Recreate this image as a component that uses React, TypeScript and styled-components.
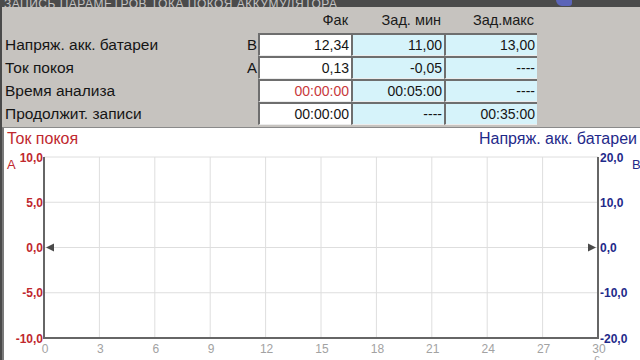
import { Fragment } from "react";
import styled, { createGlobalStyle } from "styled-components";

const GlobalStyle = createGlobalStyle`
  html, body {
    margin: 0;
    padding: 0;
    width: 640px;
    height: 360px;
    overflow: hidden;
    background: #c6c3bf;
  }
  * {
    box-sizing: border-box;
  }
`;

const Frame = styled.div`
  width: 640px;
  height: 360px;
  display: flex;
  flex-direction: column;
  font-family: "Liberation Sans", Arial, sans-serif;
  background: #c6c3bf;
  overflow: hidden;
`;

const TitleBar = styled.div`
  height: 7px;
  flex: 0 0 7px;
  background: #4b4b4b;
  display: flex;
  align-items: flex-end;
  justify-content: space-between;
  padding: 0 0 0 4px;
  overflow: hidden;
`;

const TitleText = styled.div`
  color: #c4c4c4;
  font-size: 12px;
  line-height: 12px;
  margin-bottom: -3px;
  letter-spacing: 0.5px;
  white-space: nowrap;
`;

const TitleIcon = styled.div`
  width: 16px;
  height: 6px;
  margin-right: 68px;
  align-self: flex-start;
  background: #5b64b8;
  border-radius: 0 0 3px 6px;
`;

const Body = styled.div`
  flex: 1;
  display: flex;
  flex-direction: column;
  border-left: 2px solid #4a4a4a;
`;

const TopPanel = styled.div`
  height: 120px;
  flex: 0 0 120px;
  display: grid;
  grid-template-columns: 241px 14px 93px 93px 93px;
  grid-template-rows: 26px repeat(4, 23px);
  align-items: stretch;
  padding-left: 1px;
`;

const HeadCell = styled.div`
  font-size: 14.5px;
  color: #1a1a1a;
  text-align: right;
  padding: 5px 3px 0 0;
`;

const Label = styled.div`
  font-size: 15.5px;
  color: #151515;
  display: flex;
  align-items: center;
  padding-left: 2px;
`;

const Unit = styled.div`
  font-size: 15px;
  color: #151515;
  display: flex;
  align-items: center;
  justify-content: flex-end;
  padding-right: 1px;
`;

const ValueCell = styled.div<{ $cyan?: boolean; $red?: boolean }>`
  font-size: 14px;
  color: ${({ $red }) => ($red ? "#c8383c" : "#151515")};
  background: ${({ $cyan }) => ($cyan ? "#d6f3fa" : "#ffffff")};
  border-top: 2px solid #6e6e6e;
  border-left: 2px solid #6e6e6e;
  border-bottom: 1px solid #ececec;
  display: flex;
  align-items: center;
  justify-content: flex-end;
  padding-right: 2px;
`;

const ChartPanel = styled.div`
  flex: 1;
  display: flex;
  flex-direction: column;
  background: #ffffff;
  border-top: 1px solid #8a8a8a;
  border-left: 2px solid #7a7a7a;
`;

const ChartHeader = styled.div`
  height: 21px;
  flex: 0 0 21px;
  display: flex;
  align-items: center;
  justify-content: space-between;
  padding: 1px 3px 0 3px;
  font-size: 16px;
`;

const SeriesTitle = styled.span<{ $color: string }>`
  color: ${({ $color }) => $color};
`;

const Plot = styled.svg`
  display: block;
  flex: 1;
  font-family: "Liberation Sans", Arial, sans-serif;
`;

const RED = "#c0282e";
const BLUE = "#1f2a8a";

const rows = [
  { label: "Напряж. акк. батареи", unit: "В", fak: "12,34", min: "11,00", max: "13,00" },
  { label: "Ток покоя", unit: "А", fak: "0,13", min: "-0,05", max: "----" },
  { label: "Время анализа", unit: "", fak: "00:00:00", min: "00:05:00", max: "----", red: true },
  { label: "Продолжит. записи", unit: "", fak: "00:00:00", min: "----", max: "00:35:00" },
];

const X0 = 40;
const X1 = 594;
const Y0 = 8;
const Y1 = 189;
const leftTicks = ["10,0", "5,0", "0,0", "-5,0", "-10,0"];
const rightTicks = ["20,0", "10,0", "0,0", "-10,0", "-20,0"];

function Chart() {
  const xs = Array.from({ length: 11 }, (_, i) => X0 + ((X1 - X0) * i) / 10);
  const ys = Array.from({ length: 5 }, (_, i) => Y0 + ((Y1 - Y0) * i) / 4);
  const mid = ys[2];
  return (
    <Plot viewBox="0 0 636 211" width={636} height={211}>
      {xs.slice(1, 10).map((x) => (
        <line key={x} x1={x} y1={Y0} x2={x} y2={Y1} stroke="#dedede" strokeWidth={1} />
      ))}
      {ys.slice(0, 4).map((y) => (
        <line key={y} x1={X0} y1={y} x2={X1} y2={y} stroke="#dedede" strokeWidth={1} />
      ))}
      <line x1={X0} y1={Y0} x2={X0} y2={Y1 + 1} stroke="#666" strokeWidth={2} />
      <line x1={X1} y1={Y0} x2={X1} y2={Y1 + 1} stroke="#666" strokeWidth={2} />
      <line x1={X0} y1={Y1} x2={X1} y2={Y1} stroke="#666" strokeWidth={2} />
      <polygon points={`${X0 + 2},${mid} ${X0 + 10},${mid - 4} ${X0 + 10},${mid + 4}`} fill="#4a4a4a" />
      <polygon points={`${X1 - 2},${mid} ${X1 - 10},${mid - 4} ${X1 - 10},${mid + 4}`} fill="#4a4a4a" />
      {leftTicks.map((t, i) => (
        <text key={t} x={X0 - 1} y={ys[i] + 4.5} fontSize={12} fontWeight="bold" fill={RED} textAnchor="end">
          {t}
        </text>
      ))}
      {rightTicks.map((t, i) => (
        <text key={t} x={X1 + 2} y={ys[i] + 4.5} fontSize={12} fontWeight="bold" fill={BLUE}>
          {t}
        </text>
      ))}
      <text x={3} y={20} fontSize={13} fill={RED}>А</text>
      <text x={628} y={20} fontSize={13} fill={BLUE}>В</text>
      {xs.map((x, i) => (
        <text key={i} x={x + 1} y={204} fontSize={12} fill="#a2a2a2" textAnchor="middle">
          {i * 3}
        </text>
      ))}
      <text x={X1 - 1} y={213} fontSize={11} fill="#a2a2a2" textAnchor="middle">с</text>
    </Plot>
  );
}

export default function App() {
  return (
    <Frame>
      <GlobalStyle />
      <TitleBar>
        <TitleText>ЗАПИСЬ ПАРАМЕТРОВ ТОКА ПОКОЯ АККУМУЛЯТОРА</TitleText>
        <TitleIcon />
      </TitleBar>
      <Body>
        <TopPanel>
          <div />
          <div />
          <HeadCell>Фак</HeadCell>
          <HeadCell>Зад. мин</HeadCell>
          <HeadCell>Зад.макс</HeadCell>
          {rows.map((r) => (
            <Fragment key={r.label}>
              <Label>{r.label}</Label>
              <Unit>{r.unit}</Unit>
              <ValueCell $red={r.red}>{r.fak}</ValueCell>
              <ValueCell $cyan>{r.min}</ValueCell>
              <ValueCell $cyan>{r.max}</ValueCell>
            </Fragment>
          ))}
        </TopPanel>
        <ChartPanel>
          <ChartHeader>
            <SeriesTitle $color={RED}>Ток покоя</SeriesTitle>
            <SeriesTitle $color={BLUE}>Напряж. акк. батареи</SeriesTitle>
          </ChartHeader>
          <Chart />
        </ChartPanel>
      </Body>
    </Frame>
  );
}
